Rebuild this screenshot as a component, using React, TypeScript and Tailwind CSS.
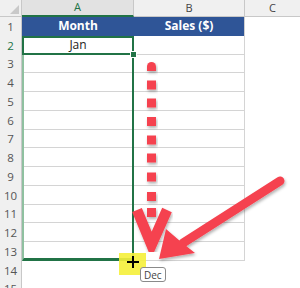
import React from 'react'

const ROWS = Array.from({ length: 15 }, (_, i) => i + 1)

export default function App() {
  return (
    <div className="relative w-[300px] h-[288px] overflow-hidden bg-white font-['Open_Sans',sans-serif] text-[#333]">
      {/* Sheet grid */}
      <div className="grid grid-cols-[22px_112px_111px_55px] grid-rows-[17px_repeat(15,18.77px)]">
        {/* Column headers */}
        <div className="relative bg-[#f0f0f0] border-r border-b border-[#c8c8c8]">
          <div className="absolute right-[2px] bottom-[2px] w-0 h-0 border-l-[9px] border-l-transparent border-b-[9px] border-b-[#c9c9c9]" />
        </div>
        <div className="flex items-center justify-center bg-[#e2e2e2] border-r border-[#c8c8c8] border-b-2 border-b-[#217346] text-[11px] text-[#217346]">
          A
        </div>
        <div className="flex items-center justify-center bg-[#f0f0f0] border-r border-b border-[#c8c8c8] text-[11px] text-[#444]">
          B
        </div>
        <div className="flex items-center justify-center bg-[#f0f0f0] border-b border-[#c8c8c8] text-[11px] text-[#444]">
          C
        </div>

        {ROWS.map((r) => (
          <React.Fragment key={r}>
            <div
              className={`flex items-center justify-center bg-[#f0f0f0] border-r border-[#c8c8c8] text-[11.5px] ${
                r === 2 ? 'text-[#217346]' : 'text-[#555]'
              }`}
            >
              {r}
            </div>
            {r === 1 ? (
              <>
                <div className="flex items-center justify-center bg-[#2f5597] text-white font-bold text-[12px]">
                  Month
                </div>
                <div className="flex items-center justify-center bg-[#2f5597] border-r border-[#d0d0d0] text-white font-bold text-[12px]">
                  Sales ($)
                </div>
              </>
            ) : r <= 13 ? (
              <>
                <div className="flex items-center justify-center border-b border-[#d4d4d4] text-[12px] text-[#222]">
                  {r === 2 ? 'Jan' : ''}
                </div>
                <div className="border-r border-b border-[#d4d4d4]" />
              </>
            ) : (
              <>
                <div />
                <div />
              </>
            )}
            <div />
          </React.Fragment>
        ))}
      </div>

      {/* Selection range A2:A13 */}
      <div className="absolute left-[22px] top-[35.77px] w-[112px] h-[225.3px] border-l-2 border-l-[#8fc0a0] border-r-2 border-r-[#217346] border-b-[3px] border-b-[#217346]" />
      {/* Active cell A2 */}
      <div className="absolute left-[22px] top-[35.77px] w-[112px] h-[19.5px] border-2 border-[#217346]" />
      <div className="absolute left-[131px] top-[52px] w-[5px] h-[5px] bg-[#217346] outline outline-1 outline-white" />

      {/* Red arrows */}
      <svg className="absolute left-0 top-0" width="300" height="288" viewBox="0 0 300 288">
        <defs>
          <filter id="sh" x="-20%" y="-20%" width="140%" height="140%">
            <feDropShadow dx="1" dy="2" stdDeviation="1.5" floodColor="#000" floodOpacity="0.3" />
          </filter>
        </defs>
        <g fill="#f5424f" filter="url(#sh)">
          <path d="M147 66.5 a4.5 4.5 0 0 1 9 0 V71 H147 Z" />
          {[80.5, 98.5, 117, 135.5, 153.5, 172.5, 192, 208].map((y) => (
            <rect key={y} x="147" y={y} width="9" height="9" />
          ))}
        </g>
        <polyline
          points="137,210 151.5,245 167,210"
          fill="none"
          stroke="#f5424f"
          strokeWidth="10.5"
          strokeLinejoin="miter"
          filter="url(#sh)"
        />
        <g filter="url(#sh)">
          <line x1="280" y1="181" x2="183" y2="243" stroke="#f5424f" strokeWidth="9" strokeLinecap="round" />
          <path d="M159 259 L166 229 L180 241 L195 253 Z" fill="#f5424f" />
        </g>
      </svg>

      {/* Fill cursor */}
      <div className="absolute left-[119px] top-[253px] w-[27px] h-[22px] bg-[#f5ef3a]/90" />
      <div className="absolute left-[127px] top-[261px] w-[12px] h-[2px] bg-black" />
      <div className="absolute left-[132px] top-[256px] w-[2px] h-[12px] bg-black" />

      {/* Tooltip */}
      <div className="absolute left-[140px] top-[267px] h-[15px] px-[3px] flex items-center bg-white border border-[#8a8a8a] rounded-[3px] text-[10px] text-[#444] leading-none">
        Dec
      </div>
    </div>
  )
}
